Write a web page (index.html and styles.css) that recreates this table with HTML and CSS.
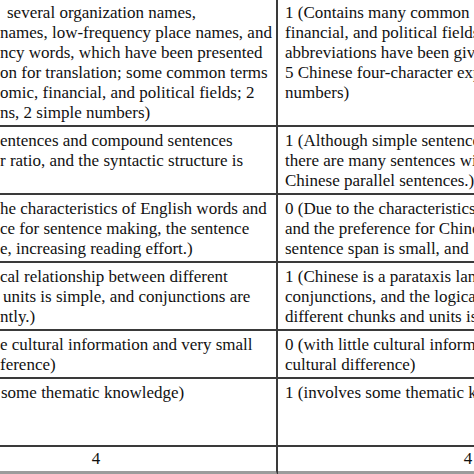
FILE: index.html
```html
<!DOCTYPE html>
<html>
<head>
<meta charset="utf-8">
<link rel="stylesheet" href="styles.css">
</head>
<body>
<div class="page">
  <div class="table">
    <div class="cell left">
      <div class="lines">
        <div class="ln i7">several organization names,</div>
        <div class="ln">names, low-frequency place names, and</div>
        <div class="ln">ncy words, which have been presented</div>
        <div class="ln">on for translation; some common terms</div>
        <div class="ln">omic, financial, and political fields; 2</div>
        <div class="ln">ns, 2 simple numbers)</div>
      </div>
    </div>
    <div class="cell right">
      <div class="ln">1 (Contains many common</div>
      <div class="ln">financial, and political fields</div>
      <div class="ln">abbreviations have been given</div>
      <div class="ln">5 Chinese four-character expressions</div>
      <div class="ln">numbers)</div>
    </div>

    <div class="cell left">
      <div class="lines">
        <div class="ln">entences and compound sentences</div>
        <div class="ln">r ratio, and the syntactic structure is</div>
        <div class="ln">&nbsp;</div>
      </div>
    </div>
    <div class="cell right">
      <div class="ln">1 (Although simple sentences</div>
      <div class="ln">there are many sentences with</div>
      <div class="ln">Chinese parallel sentences.)</div>
    </div>

    <div class="cell left">
      <div class="lines">
        <div class="ln">he characteristics of English words and</div>
        <div class="ln">ce for sentence making, the sentence</div>
        <div class="ln">e, increasing reading effort.)</div>
      </div>
    </div>
    <div class="cell right">
      <div class="ln">0 (Due to the characteristics</div>
      <div class="ln">and the preference for Chinese</div>
      <div class="ln">sentence span is small, and</div>
    </div>

    <div class="cell left">
      <div class="lines">
        <div class="ln">cal relationship between different</div>
        <div class="ln i3">units is simple, and conjunctions are</div>
        <div class="ln">ntly.)</div>
      </div>
    </div>
    <div class="cell right">
      <div class="ln">1 (Chinese is a parataxis language</div>
      <div class="ln">conjunctions, and the logical</div>
      <div class="ln">different chunks and units is</div>
    </div>

    <div class="cell left">
      <div class="lines">
        <div class="ln">e cultural information and very small</div>
        <div class="ln">ference)</div>
      </div>
    </div>
    <div class="cell right">
      <div class="ln">0 (with little cultural information</div>
      <div class="ln">cultural difference)</div>
    </div>

    <div class="cell left">
      <div class="lines tall">
        <div class="ln i1">some thematic knowledge)</div>
      </div>
    </div>
    <div class="cell right">
      <div class="tall">
        <div class="ln">1 (involves some thematic knowledge)</div>
      </div>
    </div>

    <div class="cell left last">
      <div class="ln num">4</div>
    </div>
    <div class="cell right last">
      <div class="ln num">4</div>
    </div>
  </div>
</div>
</body>
</html>
```
FILE: styles.css
```css
html, body {
  margin: 0;
  padding: 0;
  background: #ffffff;
}

.page {
  width: 474px;
  height: 474px;
  overflow: hidden;
  background: #ffffff;
}

.table {
  display: grid;
  grid-template-columns: 362px 380px;
  margin-left: -84px;
  margin-top: -1px;
  font-family: "Liberation Serif", "Times New Roman", serif;
  font-size: 17px;
  line-height: 20px;
  color: #111111;
}

.cell {
  padding: 4px 7px 2px 7px;
  border-bottom: 2px solid #3a3a3a;
  overflow: hidden;
}

.cell.left {
  border-right: 2px solid #3a3a3a;
}

.cell.last {
  padding-top: 2px;
  border-bottom: 6px solid #9c9c9c;
}

.lines {
  margin-left: 77px;
}

.tall {
  height: 60px;
}

.ln {
  white-space: nowrap;
}

.i7 {
  padding-left: 7px;
}

.i3 {
  padding-left: 3px;
}

.i1 {
  padding-left: 1px;
}

.num {
  text-align: center;
}
```
